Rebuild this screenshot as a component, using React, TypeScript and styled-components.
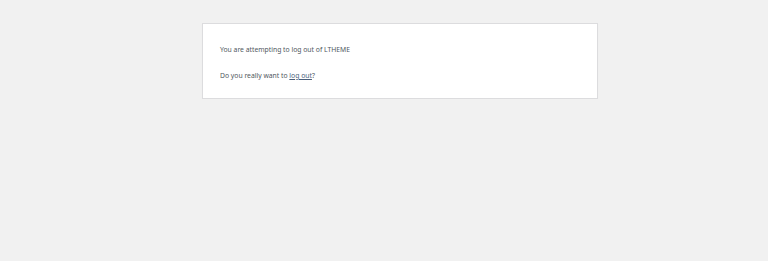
import {createGlobalStyle, styled} from 'styled-components';

const GlobalStyle = createGlobalStyle`
    html {
        background: #f1f1f1;
    }
    body {
        margin: 0;
        background: #f1f1f1;
    }
`

const ErrorPage = styled.div`
    box-sizing: border-box;
    width: 396px;
    height: 76px;
    margin: 23px 0 0 202px;
    padding: 5px 17px 3px;
    background: #fff;
    border: 1px solid #dcdcde;
    box-shadow: 0 1px 1px rgba(0, 0, 0, 0.04);
    color: #50575e;
    font-family: 'Noto Sans', 'Open Sans', sans-serif;
`

const Message = styled.p`
    margin: 15px 0 14px;
    font-size: 6.8px;
    line-height: 12px;

    & + & {
        margin-top: 14px;
    }
`

const Link = styled.a`
    color: #4b5f7a;
    text-decoration: underline;
`

export default function App() {
    return (
        <>
            <GlobalStyle/>
            <ErrorPage>
                <Message>You are attempting to log out of LTHEME</Message>
                <Message>
                    Do you really want to <Link href="#">log out</Link>?
                </Message>
            </ErrorPage>
        </>
    )
}
